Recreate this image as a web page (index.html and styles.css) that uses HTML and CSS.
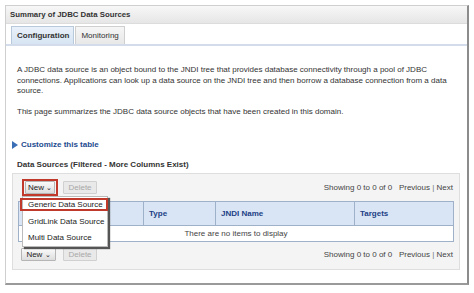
FILE: index.html
```html
<!DOCTYPE html>
<html lang="en">
<head>
  <meta charset="UTF-8">
  <title>Summary of JDBC Data Sources</title>
  <link rel="stylesheet" href="styles.css">
</head>
<body>
  <div class="panel">
    <div class="panel-title">Summary of JDBC Data Sources</div>
    <div class="tabs">
      <a class="tab active">Configuration</a>
      <a class="tab">Monitoring</a>
    </div>
    <div class="content">
      <p class="intro">A JDBC data source is an object bound to the JNDI tree that provides database connectivity through a pool of JDBC connections. Applications can look up a data source on the JNDI tree and then borrow a database connection from a data source.</p>
      <p class="intro">This page summarizes the JDBC data source objects that have been created in this domain.</p>

      <a class="customize"><span class="arrow"></span>Customize this table</a>
      <div class="table-title">Data Sources (Filtered - More Columns Exist)</div>

      <div class="grid-box">
        <div class="toolbar top">
          <div class="new-wrap">
            <span class="highlight"><button class="btn new">New <span class="chev">&#8964;</span></button></span>
            <ul class="menu">
              <li class="picked">Generic Data Source</li>
              <li>GridLink Data Source</li>
              <li>Multi Data Source</li>
            </ul>
          </div>
          <button class="btn disabled">Delete</button>
          <div class="pager">Showing 0 to 0 of 0 &nbsp; Previous <span class="sep">|</span> Next</div>
        </div>
        <table class="grid">
          <tr>
            <th class="c-name"></th>
            <th class="c-type">Type</th>
            <th class="c-jndi">JNDI Name</th>
            <th>Targets</th>
          </tr>
          <tr>
            <td colspan="4" class="empty">There are no items to display</td>
          </tr>
        </table>
        <div class="toolbar bottom">
          <button class="btn new">New <span class="chev">&#8964;</span></button>
          <button class="btn disabled">Delete</button>
          <div class="pager">Showing 0 to 0 of 0 &nbsp; Previous <span class="sep">|</span> Next</div>
        </div>
      </div>
    </div>
  </div>
</body>
</html>
```

FILE: styles.css
```css
body {
  margin: 0;
  background: #fff;
  font-family: 'Liberation Sans', Arial, sans-serif;
  font-size: 8px;
  color: #333;
}
.panel {
  margin: 5px 0 0 5px;
  width: 461px;
  height: 277px;
  border: 1px solid #cfcfcf;
  border-right: 2px solid #8c8c8c;
  border-bottom: 2px solid #9a9a9a;
  background: #fff;
}
.panel-title {
  height: 17px;
  line-height: 17px;
  padding-left: 4px;
  font-weight: bold;
  font-size: 7.8px;
  color: #333;
  background: linear-gradient(#f7f7f7, #e6e6e6);
  border-bottom: 1px solid #dcdcdc;
}
.tabs {
  display: flex;
  padding: 2px 0 0 5px;
  border-bottom: 2px solid #d3dcea;
}
.tab {
  height: 17px;
  line-height: 18px;
  padding: 0 5px;
  margin-right: 1px;
  border: 1px solid #cfcfcf;
  border-bottom: none;
  background: linear-gradient(#f6f6f6, #e8e8e8);
  color: #333;
}
.tab.active {
  font-weight: bold;
  padding: 0 4px 0 5px;
  background: linear-gradient(#e9f1fa, #d6e4f3);
  border-color: #b9c9dc;
}
.content {
  padding: 0 6px 0 6px;
}
.intro {
  margin: 0;
  padding: 0 8px 0 5px;
  line-height: 10.5px;
}
.intro:first-child {
  margin-top: 19px;
}
.intro + .intro {
  margin-top: 10px;
}
.customize {
  display: flex;
  align-items: center;
  margin-top: 23px;
  font-weight: bold;
  color: #1d4b8f;
}
.arrow {
  width: 0;
  height: 0;
  margin-right: 3px;
  border-left: 6px solid #3a6fb5;
  border-top: 4px solid transparent;
  border-bottom: 4px solid transparent;
}
.table-title {
  margin-top: 11px;
  padding-left: 5px;
  font-weight: bold;
  color: #333;
}
.grid-box {
  margin-top: 4px;
  margin-right: 1px;
  padding: 5px 5px 7px 5px;
  background: #f4f4f4;
  border: 1px solid #dedede;
}
.toolbar {
  display: flex;
  align-items: center;
}
.toolbar.top {
  height: 17px;
  gap: 5px;
  padding-left: 4px;
  margin-bottom: 5px;
}
.toolbar.bottom {
  height: 15px;
  gap: 7px;
  padding-left: 3px;
  margin-top: 5px;
}
.new-wrap {
  position: relative;
}
.highlight {
  display: flex;
  border: 2px solid #c0392b;
  padding: 0 1px;
}
.btn {
  height: 13px;
  padding: 0 3px;
  white-space: nowrap;
  font-family: inherit;
  font-size: 8px;
  line-height: 11px;
  color: #222;
  background: linear-gradient(#fafafa, #dddddd);
  border: 1px solid #b5b5b5;
  border-radius: 1px;
}
.toolbar.top .btn.new {
  width: 30px;
  padding: 0 2px;
}
.toolbar.bottom .btn.new {
  width: 35px;
}
.btn.disabled {
  color: #a8a8a8;
  background: #e9e9e9;
  border-color: #d0d0d0;
  width: 34px;
}
.chev {
  font-size: 7px;
}
.pager {
  margin-left: auto;
  padding-right: 1px;
  color: #444;
}
.sep {
  color: #777;
}
.menu {
  position: absolute;
  left: 0;
  top: 17px;
  z-index: 2;
  margin: 0;
  padding: 1px 0 0 0;
  width: 84px;
  list-style: none;
  background: #fff;
  border: 1px solid #bbb;
  box-shadow: 2px 2px 1px #555;
}
.menu li {
  height: 16px;
  line-height: 16px;
  padding-left: 5px;
  color: #222;
}
.menu li.picked {
  height: 9px;
  line-height: 9px;
  margin: 0 -1px 3px -3px;
  padding-left: 6px;
  border: 2px solid #c0392b;
}
.grid {
  width: 100%;
  border-collapse: collapse;
  background: #fff;
  border: 1px solid #9fb1c9;
}
.grid th {
  height: 23px;
  padding: 0 0 0 5px;
  text-align: left;
  font-weight: bold;
  color: #1d3f86;
  background: #d9e5f4;
  border: 1px solid #9fb1c9;
}
.c-name { width: 119px; }
.c-type { width: 66px; }
.c-jndi { width: 133px; }
.grid td.empty {
  height: 15px;
  padding: 0;
  text-align: center;
  color: #444;
}
```
